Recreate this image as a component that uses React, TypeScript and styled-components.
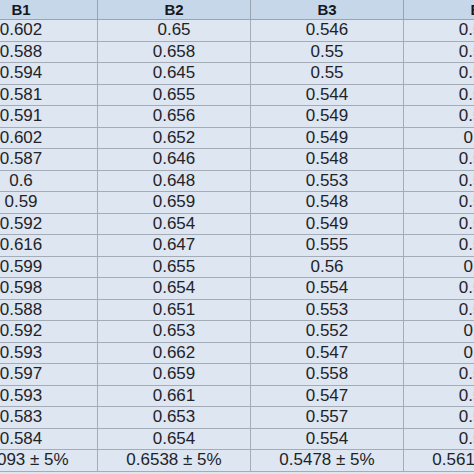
import React from 'react'
import styled, { createGlobalStyle } from 'styled-components'

const GlobalStyle = createGlobalStyle`
    html, body {
        margin: 0;
        padding: 0;
        background: #dde6f1;
        overflow: hidden;
    }
    body {
        font-family: 'Liberation Sans', Arial, sans-serif;
        color: #1f2329;
    }
`

const headers = ['B1', 'B2', 'B3', 'B4']

const rows: string[][] = [
    ['0.602', '0.65', '0.546', '0.558'],
    ['0.588', '0.658', '0.55', '0.559'],
    ['0.594', '0.645', '0.55', '0.556'],
    ['0.581', '0.655', '0.544', '0.557'],
    ['0.591', '0.656', '0.549', '0.559'],
    ['0.602', '0.652', '0.549', '0.56'],
    ['0.587', '0.646', '0.548', '0.562'],
    ['0.6', '0.648', '0.553', '0.558'],
    ['0.59', '0.659', '0.548', '0.563'],
    ['0.592', '0.654', '0.549', '0.561'],
    ['0.616', '0.647', '0.555', '0.564'],
    ['0.599', '0.655', '0.56', '0.56'],
    ['0.598', '0.654', '0.554', '0.559'],
    ['0.588', '0.651', '0.553', '0.564'],
    ['0.592', '0.653', '0.552', '0.57'],
    ['0.593', '0.662', '0.547', '0.56'],
    ['0.597', '0.659', '0.558', '0.566'],
    ['0.593', '0.661', '0.547', '0.565'],
    ['0.583', '0.653', '0.557', '0.562'],
    ['0.584', '0.654', '0.554', '0.561'],
]

const footer = ['0.5093 ± 5%', '0.6538 ± 5%', '0.5478 ± 5%', '0.5618 ± 5%']

const App: React.FC = () => (
    <>
        <GlobalStyle />
        <Viewport>
            <Table>
                <colgroup>
                    {headers.map(h => (
                        <Col key={h} />
                    ))}
                </colgroup>
                <thead>
                    <tr>
                        {headers.map(h => (
                            <HeadCell key={h}>{h}</HeadCell>
                        ))}
                    </tr>
                </thead>
                <tbody>
                    {rows.map((r, i) => (
                        <Row key={i}>
                            {r.map((v, j) => (
                                <Cell key={j}>{v}</Cell>
                            ))}
                        </Row>
                    ))}
                    <Row>
                        {footer.map((v, j) => (
                            <Cell key={j}>{v}</Cell>
                        ))}
                    </Row>
                </tbody>
            </Table>
        </Viewport>
    </>
)

export default App

const Viewport = styled.div`
    width: 474px;
    height: 474px;
    overflow: hidden;
`

const Table = styled.table`
    margin-left: -56px;
    margin-top: -1px;
    width: 612px;
    border-collapse: collapse;
    table-layout: fixed;
`

const Col = styled.col`
    width: 153px;
`

const HeadCell = styled.th`
    height: 19px;
    padding: 0;
    background: #c6d7ea;
    border: 1px solid #9aa4b0;
    font-size: 15px;
    font-weight: 700;
    color: #15181d;
    text-align: center;
    vertical-align: middle;
`

const Row = styled.tr`
    height: 21.5px;
`

const Cell = styled.td`
    padding: 0;
    background: #dde6f1;
    border: 1px solid #a3acb7;
    font-size: 17px;
    line-height: 20px;
    text-align: center;
    vertical-align: middle;
    white-space: nowrap;
`
